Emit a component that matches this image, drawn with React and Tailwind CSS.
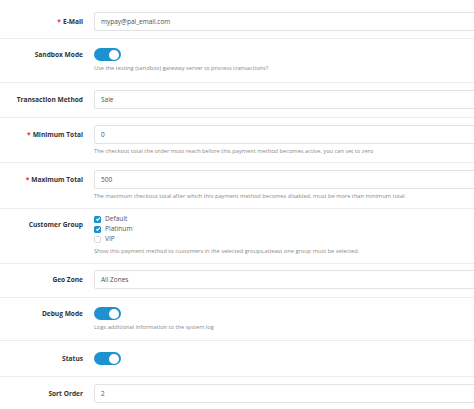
import React from "react";

const blue = "bg-[#1e91cf]";

function Row({ label, required, children, labelTop = "pt-[5px]", className = "" }) {
  return (
    <div className={`flex border-b border-[#ececec] ${className}`}>
      <div
        className={`w-[83px] shrink-0 flex justify-end items-start ${labelTop} text-[6.6px] font-bold text-[#333] leading-[9px]`}
      >
        {required && <span className="text-[#e4322b] mr-[2px]">*</span>}
        {label}
      </div>
      <div className="flex-1 ml-[11px] -mr-[6px]">{children}</div>
    </div>
  );
}

function Input({ value }) {
  return (
    <div className="h-[19px] border border-[#e2e2e2] rounded-[2px] flex items-center px-[6px] text-[6.5px] text-[#505050] bg-white">
      {value}
    </div>
  );
}

function Help({ children }) {
  return <div className="text-[5.7px] text-[#8a8a8a] leading-[8px] mt-[3px] whitespace-nowrap">{children}</div>;
}

function Toggle() {
  return (
    <div className={`w-[27px] h-[13px] rounded-full ${blue} flex items-center justify-end pr-[2px]`}>
      <div className="w-[10px] h-[10px] rounded-full bg-white" />
    </div>
  );
}

function Check({ checked, label }) {
  return (
    <div className="flex items-center gap-[3px] h-[10px] text-[6.6px] text-[#555]">
      {checked ? (
        <div className={`w-[7px] h-[7px] rounded-[1.5px] ${blue} flex items-center justify-center`}>
          <svg width="6" height="6" viewBox="0 0 10 10">
            <path d="M2 5.2 L4.2 7.3 L8 2.8" stroke="white" strokeWidth="1.8" fill="none" />
          </svg>
        </div>
      ) : (
        <div className="w-[7px] h-[7px] rounded-[1.5px] border border-[#d6d6d6] bg-white" />
      )}
      <span className="ml-[1px]">{label}</span>
    </div>
  );
}

export default function App() {
  return (
    <div className="w-[474px] h-[409px] overflow-hidden bg-white font-['Open_Sans',sans-serif]">
      <Row label="E-Mail" required className="pt-[12px] pb-[7px]">
        <Input value="mypay@pal_email.com" />
      </Row>

      <Row label="Sandbox Mode" labelTop="pt-[2px]" className="pt-[9px] pb-[10px]">
        <Toggle />
        <Help>Use the testing (sandbox) gateway server to process transactions?</Help>
      </Row>

      <Row label="Transaction Method" className="pt-[7px] pb-[8px]">
        <Input value="Sale" />
      </Row>

      <Row label="Minimum Total" required className="pt-[7px] pb-[7px]">
        <Input value="0" />
        <Help>
          The checkout total the order must reach before this payment method becomes active, you can set to zero
        </Help>
      </Row>

      <Row label="Maximum Total" required className="pt-[7px] pb-[8px]">
        <Input value="500" />
        <Help>
          The maximum checkout total after which this payment method becomes disabled, must be more than minimum total
        </Help>
      </Row>

      <Row label="Customer Group" labelTop="pt-[5.5px]" className="pt-[5px] pb-[8px]">
        <div className="flex flex-col">
          <Check checked label="Default" />
          <Check checked label="Platinum" />
          <Check label="VIP" />
        </div>
        <Help>Show this payment method to customers in the selected groups,atleast one group must be selected.</Help>
      </Row>

      <Row label="Geo Zone" className="pt-[6px] pb-[8px]">
        <Input value="All Zones" />
      </Row>

      <Row label="Debug Mode" labelTop="pt-[2px]" className="pt-[9px] pb-[9px]">
        <Toggle />
        <Help>Logs additional information to the system log</Help>
      </Row>

      <Row label="Status" labelTop="pt-[2px]" className="pt-[11px] pb-[11px]">
        <Toggle />
      </Row>

      <Row label="Sort Order" className="pt-[7px] pb-[8px]">
        <Input value="2" />
      </Row>
    </div>
  );
}
